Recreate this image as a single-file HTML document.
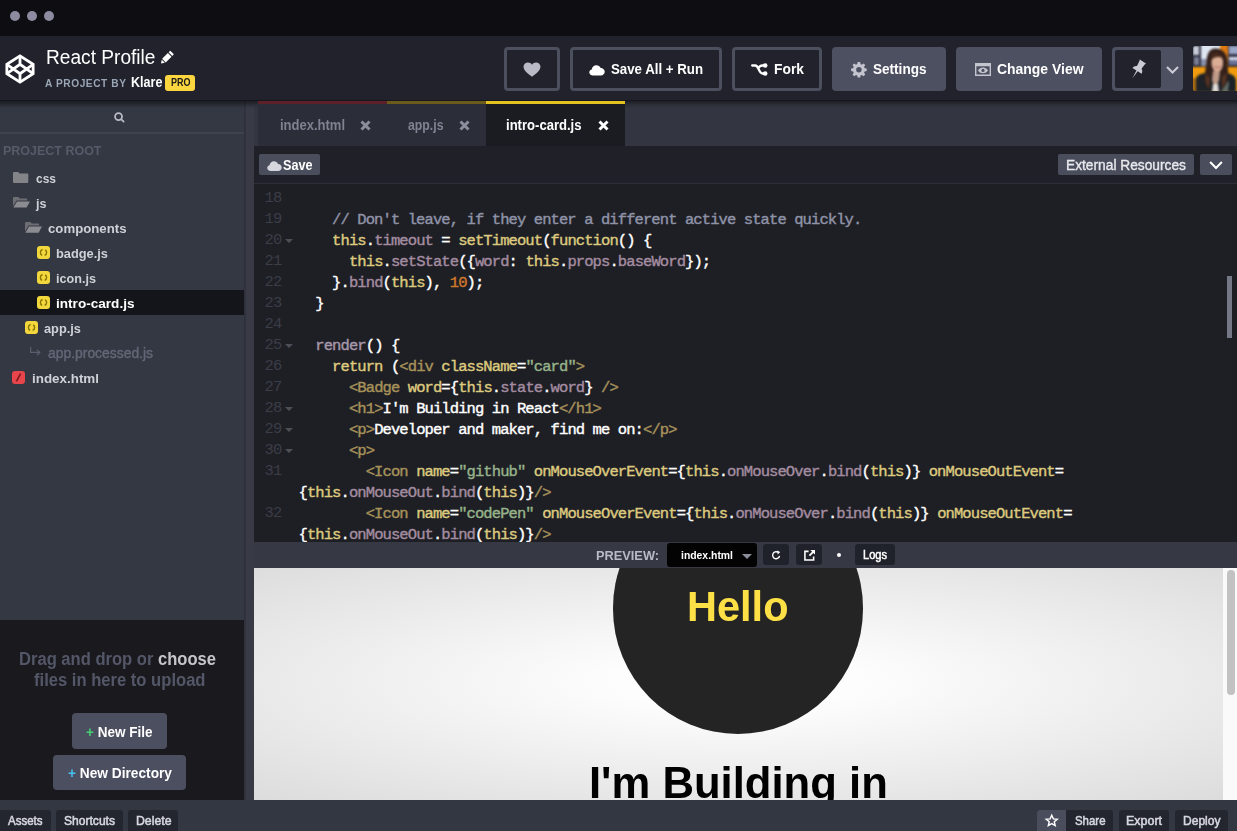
<!DOCTYPE html>
<html lang="en">
<head>
<meta charset="utf-8">
<title>React Profile</title>
<style>
*{box-sizing:border-box;margin:0;padding:0}
html,body{width:1237px;height:831px;overflow:hidden;background:#1e1f25}
body{position:relative;font-family:"Liberation Sans",sans-serif;color:#fff;-webkit-font-smoothing:antialiased}
.abs,.t{position:absolute}
.t{white-space:nowrap;line-height:1}
svg{position:absolute;display:block;overflow:visible}
/* title bar */
#titlebar{left:0;top:0;width:1237px;height:36px;background:#0e0d12}
.dot{position:absolute;top:10.8px;width:10px;height:10px;border-radius:50%;background:#8c8ba0}
/* header */
#header{left:0;top:36px;width:1237px;height:65px;background:#21222b;border-bottom:1.5px solid #16171c}
.hbtn{position:absolute;top:47px;height:44px;border-radius:4px}
.hbtn.ol{border:3px solid #4c4f5d;background:#21222b}
.hbtn.fl{background:#4c5061}

/* sidebar */
#sidebar{left:0;top:101px;width:244px;height:519px;background:#343842}
#resizer{left:244px;top:101px;width:10px;height:699px;background:#383b46;border-left:2px solid #2f323c}
#drop{left:0;top:620px;width:244px;height:180px;background:#19191e}
.tree{font-weight:bold;font-size:13.5px;color:#cfd1d8}
.jsi{width:13px;height:13px;border-radius:3px;background:#f2d83c}
.jsg{width:13px;text-align:center;font-size:8.5px;font-weight:bold;color:#6b5a10;line-height:13px;letter-spacing:1px;text-indent:1px}
/* footer */
#footer{left:0;top:800px;width:1237px;height:31px;background:#333742}
.fbtn{position:absolute;top:810px;height:24px;border-radius:3px;background:#24262f}
.ft{font-weight:normal;font-size:13px;-webkit-text-stroke:0.55px #d6d8df;color:#d6d8df}
/* editor */
#tabbar{left:254px;top:101px;width:983px;height:45px;background:linear-gradient(#1c1d24 0,#2d3039 4px,#333641 8px)}
#toolbar{left:254px;top:146px;width:983px;height:38px;background:#1f2028;border-bottom:1px solid #2c2e38}
#editor{left:254px;top:184px;width:983px;height:358px;background:#1e1f25;overflow:hidden}
.cl{position:absolute;left:254px;height:21px;width:983px}
.cl pre{position:absolute;left:44.5px;-webkit-text-stroke:0.4px currentColor;top:0;font-family:"Liberation Mono",monospace;font-size:15.5px;line-height:21px;color:#fff;letter-spacing:-0.9px}
.ln{position:absolute;right:955.6px;top:-1px;font-family:"Liberation Mono",monospace;font-size:15.5px;letter-spacing:-0.9px;line-height:21px;color:#3b3d47}
.fold{position:absolute;left:30.5px;top:8px;width:0;height:0;border-left:4.8px solid transparent;border-right:4.8px solid transparent;border-top:4.8px solid #4c4e58}
.c{color:#8f93a8}.k{color:#ddca7e}.p{color:#a48ca0}.w{color:#fff}.n{color:#d0782a}.t2{}.a{color:#ddca7e}.s{color:#96b38a}.v{color:#a797ab}
pre .t{position:static;color:#a7925a}
/* preview */
#pbar{left:254px;top:542px;width:983px;height:26px;background:#363943}
#preview{left:254px;top:568px;width:969px;height:232px;background:radial-gradient(ellipse 900px 200px at 50% 49%,#ffffff 0%,#fdfdfd 14%,#d2d2d2 100%);overflow:hidden}
#pscroll{left:1223px;top:568px;width:14px;height:232px;background:#fafafa}
</style>
</head>
<body>
<!-- ===== title bar ===== -->
<div id="titlebar" class="abs">
  <div class="dot" style="left:10px"></div><div class="dot" style="left:27px"></div><div class="dot" style="left:44px"></div>
</div>

<!-- ===== header ===== -->
<div id="header" class="abs"></div>
<svg style="left:5px;top:53.7px" width="30" height="30" viewBox="0 0 32 32" fill="none" stroke="#fff" stroke-width="3" stroke-linejoin="miter">
  <path d="M16 2 L30 11 L30 21 L16 30 L2 21 L2 11 Z"/>
  <path d="M16 2 V11 M16 21 V30 M2 11 L16 21 L30 11 M2 21 L16 11 L30 21"/>
</svg>
<div class="t" id="title" style="left:45.5px;top:47px;font-size:20px;color:#fff;transform:scaleX(0.9563);transform-origin:0 0">React Profile</div>
<svg style="left:160.8px;top:49.6px" width="13.6" height="13.8" viewBox="0 0 15 15"><path d="M10.2 0.6 L14.2 4.6 L12.4 6.4 L8.4 2.4 Z M7.6 3.2 L11.6 7.2 L5.2 13.6 L1.2 9.6 Z M0.8 10.6 L4.2 14 L0 14.8 Z" fill="#fff"/></svg>
<div class="t" id="projby" style="left:45.0px;top:77.6px;font-size:11px;font-weight:bold;letter-spacing:0.6px;color:#9aa5b6;transform:scaleX(0.9252);transform-origin:0 0">A PROJECT BY</div>
<div class="t" id="klare" style="left:130.5px;top:74.6px;font-size:14px;font-weight:bold;color:#fff;transform:scaleX(0.8992);transform-origin:0 0">Klare</div>
<div class="abs" style="left:165px;top:75px;width:30px;height:16px;border-radius:3px;background:#fcd53f"></div>
<div class="t" id="pro" style="left:170.5px;top:77.5px;font-size:10px;font-weight:bold;color:#1a1a1a;transform:scaleX(0.8998);transform-origin:0 0">PRO</div>

<!-- header buttons -->
<div class="hbtn ol" style="left:504px;width:56px"></div>
<svg style="left:523px;top:61.5px" width="18" height="15.5" viewBox="0 0 20 18" preserveAspectRatio="none"><path d="M10 17.2 C4 12.2 0.6 9.2 0.6 5.4 C0.6 2.6 2.8 0.6 5.4 0.6 C7.3 0.6 9 1.6 10 3.2 C11 1.6 12.7 0.6 14.6 0.6 C17.2 0.6 19.4 2.6 19.4 5.4 C19.4 9.2 16 12.2 10 17.2 Z" fill="#b9bac6"/></svg>

<div class="hbtn ol" style="left:570px;width:152px"></div>
<svg style="left:589px;top:64.7px" width="16" height="10.5" viewBox="0 0 18 12" preserveAspectRatio="none"><path d="M4.4 12 C2 12 0.3 10.4 0.3 8.4 C0.3 6.7 1.5 5.3 3.1 5 C3.3 2.3 5.5 0.2 8.3 0.2 C10.5 0.2 12.4 1.5 13.2 3.5 C15.7 3.6 17.7 5.5 17.7 7.8 C17.7 10.1 15.8 12 13.4 12 Z" fill="#fff"/></svg>
<div class="t" id="saveall" style="left:611.0px;top:60.9px;font-size:15.3px;font-weight:bold;color:#fff;transform:scaleX(0.8669);transform-origin:0 0">Save All + Run</div>

<div class="hbtn ol" style="left:732px;width:90px"></div>
<svg style="left:751px;top:63.3px" width="16.6" height="13" viewBox="0 0 16.6 13" fill="none" stroke="#fff" stroke-width="2.3" stroke-linecap="round"><path d="M1.2 2.5 H4.4 C7.4 2.5 8 10.5 11.4 10.5 H13 M7.2 5.4 C8.2 3.4 9.4 2.5 11.4 2.5 H13"/><circle cx="14.2" cy="2.5" r="2.3" fill="#fff" stroke="none"/><circle cx="14.2" cy="10.5" r="2.3" fill="#fff" stroke="none"/></svg>
<div class="t" id="fork" style="left:773.5px;top:60.9px;font-size:15.3px;font-weight:bold;color:#fff;transform:scaleX(0.9048);transform-origin:0 0">Fork</div>

<div class="hbtn fl" style="left:832px;width:114px"></div>
<svg style="left:851.3px;top:62px" width="15.8" height="15.6" viewBox="0 0 16 16"><path fill="#c3c4ce" fill-rule="evenodd" d="M6.7 0 H9.3 L9.7 2.1 L11 2.7 L12.8 1.5 L14.5 3.2 L13.3 5 L13.9 6.3 L16 6.7 V9.3 L13.9 9.7 L13.3 11 L14.5 12.8 L12.8 14.5 L11 13.3 L9.7 13.9 L9.3 16 H6.7 L6.3 13.9 L5 13.3 L3.2 14.5 L1.5 12.8 L2.7 11 L2.1 9.7 L0 9.3 V6.7 L2.1 6.3 L2.7 5 L1.5 3.2 L3.2 1.5 L5 2.7 L6.3 2.1 Z M8 5.2 A2.8 2.8 0 1 0 8 10.8 A2.8 2.8 0 1 0 8 5.2 Z"/></svg>
<div class="t" id="settings" style="left:873.0px;top:60.9px;font-size:15.3px;font-weight:bold;color:#fff;transform:scaleX(0.8866);transform-origin:0 0">Settings</div>

<div class="hbtn fl" style="left:956px;width:146px"></div>
<svg style="left:975px;top:63px" width="16" height="13" viewBox="0 0 16 13"><path fill="#c3c4ce" fill-rule="evenodd" d="M0 0 H16 V13 H0 Z M1.4 3.2 V11.6 H14.6 V3.2 Z"/><path fill="#c3c4ce" fill-rule="evenodd" d="M8 4.6 C10.4 4.6 12.2 6 13 7.4 C12.2 8.8 10.4 10.2 8 10.2 C5.6 10.2 3.8 8.8 3 7.4 C3.8 6 5.6 4.6 8 4.6 Z M8 5.8 A1.6 1.6 0 1 0 8 9 A1.6 1.6 0 1 0 8 5.8 Z"/></svg>
<div class="t" id="changeview" style="left:996.5px;top:60.9px;font-size:15.3px;font-weight:bold;color:#fff;transform:scaleX(0.9111);transform-origin:0 0">Change View</div>

<div class="hbtn fl" style="left:1112px;width:71px"></div>
<div class="abs" style="left:1115px;top:50px;width:46px;height:38px;background:#21222b;border-radius:2px"></div>
<svg style="left:1128.2px;top:59px" width="19.5" height="21.5" viewBox="0 0 18 20"><g transform="rotate(32 9 10)"><path fill="#c9cad3" d="M5.6 1 H12.4 L11.9 2.8 L11.5 7.4 C13.2 8.2 14 9.6 14 11.2 H9.7 L9 19.6 L8.3 11.2 H4 C4 9.6 4.8 8.2 6.5 7.4 L6.1 2.8 Z"/></g></svg>
<svg style="left:1165.6px;top:65.6px" width="13" height="8" viewBox="0 0 13 8" fill="none" stroke="#c9cad4" stroke-width="2.2"><path d="M1 1 L6.5 6.5 L12 1"/></svg>

<!-- avatar -->
<div class="abs" id="avatar" style="left:1193px;top:45.5px;width:44px;height:45.5px;border-radius:2px 0 0 2px;overflow:hidden;background:#3a2a22">
<svg style="left:0;top:0" width="44" height="45.5" viewBox="0 0 44 45.5">
<g style="filter:blur(0.8px)">
<rect x="-2" y="-2" width="48" height="50" fill="#3a2c28"/>
<rect x="-2" y="-2" width="10" height="23" fill="#2a2c3e"/>
<rect x="0" y="0" width="6" height="9" fill="#c8ccd8"/>
<rect x="1" y="11" width="5" height="8" fill="#7a7f95"/>
<rect x="8" y="-2" width="19" height="22" fill="#dfe6f2"/>
<rect x="8" y="13" width="12" height="7" fill="#8a93ad"/>
<rect x="27" y="-2" width="8" height="23" fill="#e07a10"/>
<rect x="35" y="-2" width="11" height="22" fill="#30324a"/>
<rect x="36" y="0" width="10" height="8" fill="#9aa6c8"/>
<rect x="36" y="11" width="10" height="3" fill="#d8dcec"/>
<rect x="36" y="14" width="10" height="5" fill="#6a7298"/>
<rect x="-2" y="21" width="48" height="27" fill="#f09a0c"/>
<rect x="-2" y="32" width="6" height="16" fill="#a86a10"/>
<path d="M3 46 V34 C3 29 8 27 14 27 H32 C38 27 43 30 43 35 V46 Z" fill="#1c2228"/>
<path d="M30 34 L36 36 L35 46 H29 Z" fill="#5f6b66"/>
<path d="M22.5 2.5 C30 2.500 34.500 8 34.500 16 C34.500 22 36 27 35 33 C34 38 31 42 29 43 L27 30 H18 L17 43 C13 42 11 37 11.500 31 C12 25 13 21 13.500 16 C14 8 16 2.500 22.500 2.500 Z" fill="#33201a"/>
<path d="M13 28 C12 34 13 39 16 42 L17 32 Z M33 27 C34 33 32 39 29 42 L29 31 Z" fill="#553424"/>
<ellipse cx="24.300" cy="17" rx="5.800" ry="8.800" fill="#dcae96"/>
<path d="M19 8 C22 6 28 7 30 12 C27 11 24 10 19 13 Z" fill="#4a2a1c"/>
<path d="M20 25 L27 25 L26 34 L22.500 45 L19 34 Z" fill="#c09a88"/>
<path d="M20 38 L25 38 L26 46 H19 Z" fill="#e0dcd8"/>
<path d="M21.500 20.500 Q24.500 23 27.500 20.500" stroke="#a05a50" stroke-width="1" fill="none"/>
</g>
</svg>
</div>

<!-- ===== sidebar ===== -->
<div id="sidebar" class="abs"></div>

<div class="abs" style="left:0;top:132px;width:244px;height:2px;background:#3f4350"></div>
<svg style="left:113.8px;top:112.2px" width="10.5" height="10.5" viewBox="0 0 12 12" fill="none" stroke="#b9bbc6" stroke-width="2"><circle cx="5.2" cy="5.2" r="4"/><path d="M8.4 8.4 L11 11" stroke-linecap="round"/></svg>
<div class="t" id="projroot" style="left:3.0px;top:144px;font-size:13px;font-weight:bold;color:#565a69;transform:scaleX(0.9602);transform-origin:0 0">PROJECT ROOT</div>

<div class="abs" style="left:0;top:290px;width:244px;height:25px;background:#14151a"></div>

<!-- folders -->
<svg style="left:13px;top:172px" width="15.3" height="11" viewBox="0 0 16 12" preserveAspectRatio="none"><path d="M0 1.2 C0 0.5 0.5 0 1.2 0 H5.4 L6.8 1.6 H14.8 C15.5 1.6 16 2.1 16 2.8 V10.8 C16 11.5 15.5 12 14.8 12 H1.2 C0.5 12 0 11.5 0 10.8 Z" fill="#838488"/></svg>
<div class="t tree" id="tr1" style="left:35.5px;top:171.9px;transform:scaleX(0.8877);transform-origin:0 0">css</div>
<svg style="left:13px;top:197.3px" width="17" height="10.6" viewBox="0 0 17 12" preserveAspectRatio="none"><path d="M0 1.2 C0 0.5 0.5 0 1.2 0 H5.4 L6.8 1.6 H13 C13.7 1.6 14.2 2.1 14.2 2.8 V4 H3.6 L0 10.6 Z" fill="#6c6e74"/><path d="M4 5 H17 L13.6 12 H0.4 Z" fill="#8b8c91"/></svg>
<div class="t tree" id="tr2" style="left:35.5px;top:196.9px;transform:scaleX(0.9320);transform-origin:0 0">js</div>
<svg style="left:25px;top:222.2px" width="17" height="10.7" viewBox="0 0 17 12" preserveAspectRatio="none"><path d="M0 1.2 C0 0.5 0.5 0 1.2 0 H5.4 L6.8 1.6 H13 C13.7 1.6 14.2 2.1 14.2 2.8 V4 H3.6 L0 10.6 Z" fill="#6c6e74"/><path d="M4 5 H17 L13.6 12 H0.4 Z" fill="#8b8c91"/></svg>
<div class="t tree" id="tr3" style="left:47.5px;top:221.9px;transform:scaleX(0.9780);transform-origin:0 0">components</div>
<!-- js files -->
<div class="abs jsi" style="left:37px;top:246px"></div><svg style="left:37px;top:246px" width="13" height="13" viewBox="0 0 13 13" fill="none" stroke="#8a7400" stroke-width="1.4"><circle cx="6.5" cy="6.5" r="3.1" stroke-dasharray="7.1 2.64" stroke-dashoffset="3.55"/></svg>
<div class="t tree" id="tr4" style="left:55.5px;top:246.9px;transform:scaleX(0.9495);transform-origin:0 0">badge.js</div>
<div class="abs jsi" style="left:37px;top:271px"></div><svg style="left:37px;top:271px" width="13" height="13" viewBox="0 0 13 13" fill="none" stroke="#8a7400" stroke-width="1.4"><circle cx="6.5" cy="6.5" r="3.1" stroke-dasharray="7.1 2.64" stroke-dashoffset="3.55"/></svg>
<div class="t tree" id="tr5" style="left:55.5px;top:271.9px;transform:scaleX(0.9353);transform-origin:0 0">icon.js</div>
<div class="abs jsi" style="left:37px;top:296px"></div><svg style="left:37px;top:296px" width="13" height="13" viewBox="0 0 13 13" fill="none" stroke="#8a7400" stroke-width="1.4"><circle cx="6.5" cy="6.5" r="3.1" stroke-dasharray="7.1 2.64" stroke-dashoffset="3.55"/></svg>
<div class="t tree" id="tr6" style="left:55.5px;top:296.9px;color:#fff;transform:scaleX(1.0062);transform-origin:0 0">intro-card.js</div>
<div class="abs jsi" style="left:25px;top:321px"></div><svg style="left:25px;top:321px" width="13" height="13" viewBox="0 0 13 13" fill="none" stroke="#8a7400" stroke-width="1.4"><circle cx="6.5" cy="6.5" r="3.1" stroke-dasharray="7.1 2.64" stroke-dashoffset="3.55"/></svg>
<div class="t tree" id="tr7" style="left:43.5px;top:321.9px;transform:scaleX(0.9483);transform-origin:0 0">app.js</div>
<svg style="left:30px;top:347px" width="11" height="9" viewBox="0 0 11 9" fill="none" stroke="#5b5f6e" stroke-width="1.2"><path d="M0.6 0 V5.4 H9.6 M7 2.8 L9.8 5.4 L7 8"/></svg>
<div class="t tree" id="tr8" style="left:47.5px;top:346.4px;color:#636777;-webkit-text-stroke:0.4px #636777;font-weight:normal;font-size:14px;transform:scaleX(0.9920);transform-origin:0 0">app.processed.js</div>
<div class="abs jsi" style="left:12px;top:371px;background:#e8444b"></div>
<svg style="left:12px;top:371px" width="13" height="13" viewBox="0 0 13 13" stroke="#7a1a20" stroke-width="1.6"><path d="M4.4 10.4 L8.6 2.6"/></svg>
<div class="t tree" id="tr9" style="left:31.5px;top:371.9px;transform:scaleX(0.9924);transform-origin:0 0">index.html</div>


<!-- drop area -->
<div id="drop" class="abs"></div>
<div class="t" id="drag1" style="left:18.5px;top:650.5px;font-size:17.5px;font-weight:bold;color:#535767;transform:scaleX(0.9467);transform-origin:0 0">Drag and drop or <span style="color:#c6c6c8">choose</span></div>
<div class="t" id="drag2" style="left:33.5px;top:672px;font-size:17.5px;font-weight:bold;color:#535767;transform:scaleX(0.9483);transform-origin:0 0">files in here to upload</div>
<div class="abs" style="left:72px;top:713px;width:95px;height:36px;border-radius:4px;background:#4b4f5f"></div>
<div class="t" id="newfile" style="left:86.0px;top:724px;font-size:15px;font-weight:bold;color:#fff;transform:scaleX(0.9011);transform-origin:0 0"><span style="color:#47cf73">+</span> New File</div>
<div class="abs" style="left:53px;top:755px;width:133px;height:35px;border-radius:4px;background:#4b4f5f"></div>
<div class="t" id="newdir" style="left:67.5px;top:765px;font-size:15px;font-weight:bold;color:#fff;transform:scaleX(0.9138);transform-origin:0 0"><span style="color:#45c2f0">+</span> New Directory</div>

<div id="resizer" class="abs"></div>
<div class="abs" style="left:0;top:101px;width:254px;height:7px;background:linear-gradient(rgba(18,19,24,.75),rgba(18,19,24,0))"></div>

<!-- ===== tabs ===== -->
<div id="tabbar" class="abs"></div>
<div class="abs" style="left:258px;top:101px;width:129px;height:45px;background:#2b2e38;border-top:3px solid #5c2128"></div>
<div class="abs" style="left:387px;top:101px;width:99px;height:45px;background:#2b2e38;border-top:3px solid #6b5b1b"></div>
<div class="abs" style="left:486px;top:101px;width:139px;height:45px;background:#1b1c22;border-top:3px solid #e3c21f"></div>
<div class="t" id="tab1" style="left:279.5px;top:117.6px;font-size:14px;font-weight:bold;color:#7f8291;transform:scaleX(0.9284);transform-origin:0 0">index.html</div>
<div class="t" id="tab2" style="left:407.5px;top:117.6px;font-size:14px;font-weight:bold;color:#7f8291;transform:scaleX(0.8772);transform-origin:0 0">app.js</div>
<div class="t" id="tab3" style="left:506.0px;top:117.6px;font-size:14px;font-weight:bold;color:#fff;transform:scaleX(0.9332);transform-origin:0 0">intro-card.js</div>
<svg style="left:360px;top:120px" width="11" height="11" viewBox="0 0 11 11" stroke="#8b8e9c" stroke-width="3"><path d="M1.5 1.5 L9.5 9.5 M9.5 1.5 L1.5 9.5"/></svg>
<svg style="left:459px;top:120px" width="11" height="11" viewBox="0 0 11 11" stroke="#8b8e9c" stroke-width="3"><path d="M1.5 1.5 L9.5 9.5 M9.5 1.5 L1.5 9.5"/></svg>
<svg style="left:598px;top:120px" width="11" height="11" viewBox="0 0 11 11" stroke="#fff" stroke-width="3"><path d="M1.5 1.5 L9.5 9.5 M9.5 1.5 L1.5 9.5"/></svg>

<!-- toolbar -->
<div id="toolbar" class="abs"></div>
<div class="abs" style="left:259px;top:154px;width:61px;height:21px;border-radius:2px;background:#4a4d5c"></div>
<svg style="left:266.5px;top:160.5px" width="15" height="10" viewBox="0 0 18 12"><path d="M4.4 12 C2 12 0.3 10.4 0.3 8.4 C0.3 6.7 1.5 5.3 3.1 5 C3.3 2.3 5.5 0.2 8.3 0.2 C10.5 0.2 12.4 1.5 13.2 3.5 C15.7 3.6 17.7 5.5 17.7 7.8 C17.7 10.1 15.8 12 13.4 12 Z" fill="#d6d7de"/></svg>
<div class="t" id="save" style="left:282.5px;top:158px;font-size:14px;font-weight:bold;color:#fff;transform:scaleX(0.9021);transform-origin:0 0">Save</div>
<div class="abs" style="left:1058px;top:154px;width:136px;height:21px;border-radius:2px;background:#4a4d5c"></div>
<div class="t" id="extres" style="left:1066.0px;top:157.7px;font-size:14px;font-weight:normal;-webkit-text-stroke:0.35px #e9eaee;color:#e9eaee;transform:scaleX(0.9822);transform-origin:0 0">External Resources</div>
<div class="abs" style="left:1200px;top:154px;width:32px;height:21px;border-radius:2px;background:#4a4d5c"></div>
<svg style="left:1208.5px;top:161px" width="14" height="8.5" viewBox="0 0 13 8" fill="none" stroke="#fff" stroke-width="2"><path d="M1 1 L6.5 6.5 L12 1"/></svg>

<!-- editor -->
<div id="editor" class="abs"></div>
<div class="cl" style="top:189px"><span class="ln">18</span><pre></pre></div>
<div class="cl" style="top:210px"><span class="ln">19</span><pre><span class="w">    </span><span class="c">// Don't leave, if they enter a different active state quickly.</span></pre></div>
<div class="cl" style="top:231px"><span class="ln">20</span><i class="fold"></i><pre><span class="w">    </span><span class="k">this</span><span class="w">.</span><span class="p">timeout</span><span class="w"> = </span><span class="k">setTimeout</span><span class="w">(</span><span class="k">function</span><span class="w">() {</span></pre></div>
<div class="cl" style="top:252px"><span class="ln">21</span><pre><span class="w">      </span><span class="k">this</span><span class="w">.</span><span class="p">setState</span><span class="w">({</span><span class="p">word</span><span class="w">: </span><span class="k">this</span><span class="w">.</span><span class="p">props</span><span class="w">.</span><span class="p">baseWord</span><span class="w">});</span></pre></div>
<div class="cl" style="top:273px"><span class="ln">22</span><pre><span class="w">    }.</span><span class="p">bind</span><span class="w">(</span><span class="k">this</span><span class="w">), </span><span class="n">10</span><span class="w">);</span></pre></div>
<div class="cl" style="top:294px"><span class="ln">23</span><pre><span class="w">  }</span></pre></div>
<div class="cl" style="top:315px"><span class="ln">24</span><pre></pre></div>
<div class="cl" style="top:336px"><span class="ln">25</span><i class="fold"></i><pre><span class="w">  </span><span class="v">render</span><span class="w">() {</span></pre></div>
<div class="cl" style="top:357px"><span class="ln">26</span><pre><span class="w">    </span><span class="k">return</span><span class="w"> (</span><span class="t">&lt;div</span><span class="w"> </span><span class="a">className</span><span class="w">=</span><span class="s">"card"</span><span class="t">&gt;</span></pre></div>
<div class="cl" style="top:378px"><span class="ln">27</span><pre><span class="w">      </span><span class="t">&lt;Badge</span><span class="w"> </span><span class="a">word</span><span class="w">={</span><span class="k">this</span><span class="w">.</span><span class="p">state</span><span class="w">.</span><span class="p">word</span><span class="w">}</span><span class="t"> /&gt;</span></pre></div>
<div class="cl" style="top:399px"><span class="ln">28</span><i class="fold"></i><pre><span class="w">      </span><span class="t">&lt;h1&gt;</span><span class="w">I'm Building in React</span><span class="t">&lt;/h1&gt;</span></pre></div>
<div class="cl" style="top:420px"><span class="ln">29</span><i class="fold"></i><pre><span class="w">      </span><span class="t">&lt;p&gt;</span><span class="w">Developer and maker, find me on:</span><span class="t">&lt;/p&gt;</span></pre></div>
<div class="cl" style="top:441px"><span class="ln">30</span><i class="fold"></i><pre><span class="w">      </span><span class="t">&lt;p&gt;</span></pre></div>
<div class="cl" style="top:462px"><span class="ln">31</span><pre><span class="w">        </span><span class="t">&lt;Icon</span><span class="w"> </span><span class="a">name</span><span class="w">=</span><span class="s">"github"</span><span class="w"> </span><span class="a">onMouseOverEvent</span><span class="w">={</span><span class="k">this</span><span class="w">.</span><span class="p">onMouseOver</span><span class="w">.</span><span class="p">bind</span><span class="w">(</span><span class="k">this</span><span class="w">)}</span><span class="w"> </span><span class="a">onMouseOutEvent</span><span class="w">=</span></pre></div>
<div class="cl" style="top:483px"><pre><span class="w">{</span><span class="k">this</span><span class="w">.</span><span class="p">onMouseOut</span><span class="w">.</span><span class="p">bind</span><span class="w">(</span><span class="k">this</span><span class="w">)}</span><span class="t">/&gt;</span></pre></div>
<div class="cl" style="top:504px"><span class="ln">32</span><pre><span class="w">        </span><span class="t">&lt;Icon</span><span class="w"> </span><span class="a">name</span><span class="w">=</span><span class="s">"codePen"</span><span class="w"> </span><span class="a">onMouseOverEvent</span><span class="w">={</span><span class="k">this</span><span class="w">.</span><span class="p">onMouseOver</span><span class="w">.</span><span class="p">bind</span><span class="w">(</span><span class="k">this</span><span class="w">)}</span><span class="w"> </span><span class="a">onMouseOutEvent</span><span class="w">=</span></pre></div>
<div class="cl" style="top:525px"><pre><span class="w">{</span><span class="k">this</span><span class="w">.</span><span class="p">onMouseOut</span><span class="w">.</span><span class="p">bind</span><span class="w">(</span><span class="k">this</span><span class="w">)}</span><span class="t">/&gt;</span></pre></div>
<div class="abs" style="left:1227px;top:276px;width:5px;height:61.5px;background:#747786"></div>

<!-- preview bar -->
<div id="pbar" class="abs"></div>
<div class="t" id="previewlbl" style="left:595.5px;top:548.8px;font-size:13.5px;font-weight:bold;color:#b8bac6;transform:scaleX(0.9471);transform-origin:0 0">PREVIEW:</div>
<div class="abs" style="left:667px;top:543px;width:90px;height:24px;border-radius:3px;background:#030303"></div>
<div class="t" id="psel" style="left:681.0px;top:549.5px;font-size:11px;font-weight:bold;color:#fff;transform:scaleX(0.9452);transform-origin:0 0">index.html</div>
<div class="abs" style="left:742px;top:554px;width:0;height:0;border-left:5px solid transparent;border-right:5px solid transparent;border-top:5px solid #8b8d99"></div>
<div class="abs" style="left:763px;top:544px;width:26px;height:21px;border-radius:3px;background:#20222b"></div>
<svg style="left:770.5px;top:549.5px" width="10.5" height="10.5" viewBox="0 0 13 13" fill="none" stroke="#fff" stroke-width="1.7"><path d="M10.6 7.2 A4.3 4.3 0 1 1 8.6 2.8"/><path d="M7.4 0.6 L11.4 2.6 L8.4 5.6 Z" fill="#fff" stroke="none"/></svg>
<div class="abs" style="left:796px;top:544px;width:26px;height:21px;border-radius:3px;background:#20222b"></div>
<svg style="left:803.5px;top:549.5px" width="11" height="11" viewBox="0 0 12 12" fill="none" stroke="#fff" stroke-width="1.7"><path d="M5 1.5 H1 V11 H10.5 V7"/><path d="M7 0 H12 V5 L10.2 3.2 L6.6 6.8 L5.2 5.4 L8.8 1.8 Z" fill="#fff" stroke="none"/></svg>
<div class="abs" style="left:836.5px;top:552.7px;width:4.6px;height:4.6px;border-radius:50%;background:#fff"></div>
<div class="abs" style="left:855px;top:544px;width:40px;height:21px;border-radius:3px;background:#20222b"></div>
<div class="t" id="logs" style="left:863.0px;top:549.4px;font-size:12.5px;font-weight:normal;-webkit-text-stroke:0.5px #fff;color:#fff;transform:scaleX(0.8853);transform-origin:0 0">Logs</div>

<!-- preview -->
<div id="preview" class="abs">
  <div class="abs" style="left:358.5px;top:-85px;width:250.5px;height:250.5px;border-radius:50%;background:#242424"></div>
</div>
<div class="t" id="hello" style="left:687.4px;top:585.5px;font-size:42px;font-weight:bold;color:#fde046;transform:scaleX(0.9884);transform-origin:0 0">Hello</div>
<div class="t" id="building" style="left:588.8px;top:759.5px;font-size:45px;font-weight:bold;color:#000;transform:scaleX(0.9696);transform-origin:0 0">I'm Building in</div>
<div id="pscroll" class="abs"></div>
<div class="abs" style="left:1227px;top:570px;width:8px;height:124.5px;border-radius:4px;background:#c2c2c2"></div>

<!-- ===== footer ===== -->
<div id="footer" class="abs"></div>
<div class="fbtn" style="left:-3px;width:54px"></div>
<div class="fbtn" style="left:56px;width:67px"></div>
<div class="fbtn" style="left:128px;width:50px"></div>
<div class="t ft" id="f1" style="left:8.0px;top:813.9px;transform:scaleX(0.8843);transform-origin:0 0">Assets</div>
<div class="t ft" id="f2" style="left:63.5px;top:813.9px;transform:scaleX(0.9286);transform-origin:0 0">Shortcuts</div>
<div class="t ft" id="f3" style="left:135.5px;top:813.9px;transform:scaleX(0.9447);transform-origin:0 0">Delete</div>
<div class="fbtn" style="left:1037px;width:76px"></div>
<div class="fbtn" style="left:1037px;width:29px;background:#4a4d5c;border-radius:3px 0 0 3px"></div>
<svg style="left:1045px;top:814px" width="13.5" height="12.6" viewBox="0 0 15 14" fill="none" stroke="#fff" stroke-width="1.6" stroke-linejoin="miter"><path d="M7.5 1.4 L9.3 5.4 L13.6 5.8 L10.3 8.6 L11.3 12.8 L7.5 10.6 L3.7 12.8 L4.7 8.6 L1.4 5.8 L5.7 5.4 Z"/></svg>
<div class="fbtn" style="left:1119px;width:50px"></div>
<div class="fbtn" style="left:1175px;width:53px"></div>
<div class="t ft" id="f4" style="left:1074.5px;top:813.9px;transform:scaleX(0.8789);transform-origin:0 0">Share</div>
<div class="t ft" id="f5" style="left:1125.5px;top:813.9px;transform:scaleX(0.9580);transform-origin:0 0">Export</div>
<div class="t ft" id="f6" style="left:1182.5px;top:813.9px;transform:scaleX(0.9266);transform-origin:0 0">Deploy</div>
</body>
</html>
